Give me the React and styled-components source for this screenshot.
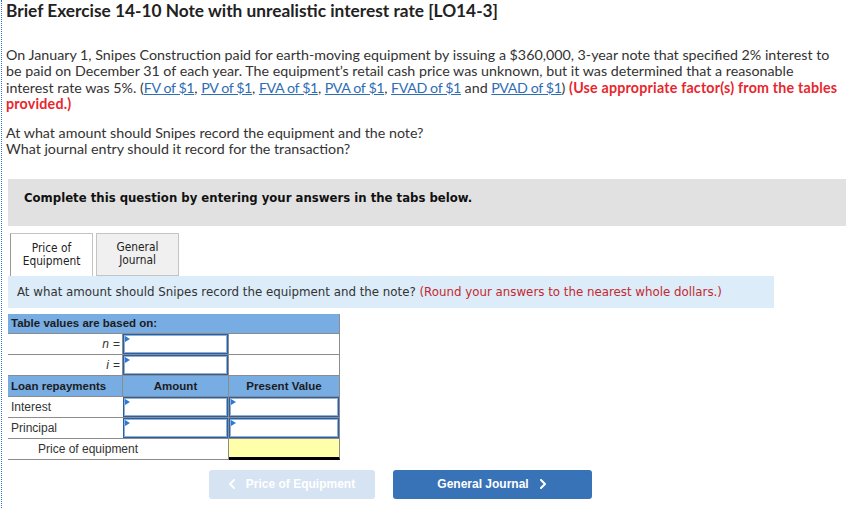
import React from "react";
import styled, { createGlobalStyle } from "styled-components";

const GlobalStyle = createGlobalStyle`
  html, body { margin: 0; padding: 0; background: #fff; }
  body { font-family: "Lato", "Liberation Sans", sans-serif; }
`;

const Page = styled.div`
  margin-left: 1px;
  border-left: 1px dotted #2f6fd8;
  min-height: 508px;
  box-sizing: border-box;
  padding: 1px 2px 0 4px;
`;

const Title = styled.h1`
  margin: 0;
  font-family: "Lato", "Liberation Sans", sans-serif;
  font-weight: 700;
  font-size: 17.3px;
  line-height: 20px;
  color: #222;
`;

const Para = styled.p`
  margin: ${(p) => p.$top}px 0 0;
  font-family: "Lato", "Liberation Sans", sans-serif;
  font-size: 14.25px;
  line-height: 16.3px;
  color: #333;
  white-space: nowrap;
`;

const Link = styled.a`
  color: #2f6eb5;
  text-decoration: underline;
  letter-spacing: -0.4px;
`;

const Alert = styled.strong`
  color: #e8262d;
  font-weight: 700;
  letter-spacing: 0.2px;
`;

const Panel = styled.div`
  margin: 21px 8px 0 2px;
  height: 47px;
  box-sizing: border-box;
  padding: 11px 16px 0;
  background: #e1e1e1;
  font-family: "DejaVu Sans Condensed", "DejaVu Sans", sans-serif;
  font-weight: 700;
  font-size: 13px;
  line-height: 16px;
  color: #111;
`;

const Tabs = styled.div`
  display: flex;
  gap: 3px;
  margin: 7px 0 0 4px;
`;

const Tab = styled.div`
  width: 83px;
  height: 43px;
  box-sizing: border-box;
  display: flex;
  align-items: center;
  justify-content: center;
  text-align: center;
  font-family: "DejaVu Sans Condensed", "DejaVu Sans", sans-serif;
  font-size: 11.8px;
  line-height: 13px;
  color: #222;
  background: ${(p) => (p.$active ? "#fff" : "#f0f0f0")};
  border: 1px solid #c4c4c4;
  border-bottom: ${(p) => (p.$active ? "none" : "1px solid #c4c4c4")};
  border-left-color: ${(p) => (p.$active ? "#999" : "#c4c4c4")};
`;

const Bar = styled.div`
  margin-left: 2px;
  width: 766px;
  height: 32px;
  box-sizing: border-box;
  padding-left: 9px;
  display: flex;
  align-items: center;
  background: #dcecf9;
  font-family: "DejaVu Sans Condensed", "DejaVu Sans", sans-serif;
  font-size: 13.15px;
  color: #333;
  white-space: pre;
`;

const Note = styled.span`
  color: #c6282e;
`;

const Grid = styled.div`
  margin: 6px 0 0 2px;
  width: 332px;
  display: grid;
  grid-template-columns: 115px 106px 111px;
  grid-template-rows: 20px repeat(6, 21px);
  font-family: "Liberation Sans", Arial, sans-serif;
  font-size: 12px;
  color: #333;
`;

const Cell = styled.div`
  box-sizing: border-box;
  display: flex;
  align-items: center;
  justify-content: ${(p) => p.$align || "flex-start"};
  grid-column: span ${(p) => p.$span || 1};
  padding: ${(p) => (p.$pad != null ? p.$pad : "0 0 0 3px")};
  background: ${(p) => (p.$head ? "#78ade3" : p.$yellow ? "#ffffaa" : "#fff")};
  color: ${(p) => (p.$head ? "#1c1c1c" : "#333")};
  font-weight: ${(p) => (p.$head ? 700 : 400)};
  font-size: ${(p) => (p.$head ? "11.5px" : "12px")};
  border-bottom: ${(p) => (p.$yellow ? "3px solid #000" : "1px solid #8c8c8c")};
  border-right: ${(p) => (p.$noRight ? "none" : "1px solid #8c8c8c")};
  position: relative;
`;

const Var = styled.i`
  font-style: italic;
  margin-right: 4px;
`;

const Field = styled.input`
  width: 100%;
  height: 100%;
  margin: 0;
  box-sizing: border-box;
  border: 1px solid #2c5f9f;
  box-shadow: inset 0 0 0 1px #8fb0da;
  background: #fff;
  outline: none;
  font: inherit;
`;

const Flag = styled.span`
  position: absolute;
  top: 2px;
  left: 2px;
  width: 0;
  height: 0;
  border-left: 5px solid #2d7ad6;
  border-top: 3px solid transparent;
  border-bottom: 3px solid transparent;
`;

const ButtonRow = styled.div`
  margin: 10px 0 0 2px;
  width: 784px;
  display: flex;
  justify-content: center;
  gap: 18px;
`;

const NavButton = styled.button`
  width: ${(p) => p.$w}px;
  height: 29px;
  border: none;
  border-radius: 3px;
  display: inline-flex;
  align-items: center;
  justify-content: center;
  gap: 10px;
  padding: 0;
  background: ${(p) => (p.disabled ? "#d6e3f2" : "#3873b8")};
  color: #fff;
  font-family: "Liberation Sans", Arial, sans-serif;
  font-weight: 700;
  font-size: 12px;
  cursor: ${(p) => (p.disabled ? "default" : "pointer")};
`;

const Chevron = ({ dir }) => (
  <svg width="8" height="10" viewBox="0 0 8 10" fill="none">
    <polyline
      points={dir === "left" ? "6,1 2,5 6,9" : "2,1 6,5 2,9"}
      stroke="#fff"
      strokeWidth="2"
      strokeLinecap="round"
      strokeLinejoin="round"
    />
  </svg>
);

const InputCell = ({ flag = true }) => (
  <Cell $pad="0">
    <Field type="text" />
    {flag && <Flag />}
  </Cell>
);

export default function App() {
  return (
    <>
      <GlobalStyle />
      <Page>
        <Title>Brief Exercise 14-10 Note with unrealistic interest rate [LO14-3]</Title>
        <Para $top={26}>
          On January 1, Snipes Construction paid for earth-moving equipment by issuing a $360,000, 3-year note that specified 2% interest to
          <br />
          be paid on December 31 of each year. The equipment’s retail cash price was unknown, but it was determined that a reasonable
          <br />
          interest rate was 5%. (<Link>FV of $1</Link>, <Link>PV of $1</Link>, <Link>FVA of $1</Link>, <Link>PVA of $1</Link>,{" "}
          <Link>FVAD of $1</Link> and <Link>PVAD of $1</Link>) <Alert>(Use appropriate factor(s) from the tables</Alert>
          <br />
          <Alert>provided.)</Alert>
        </Para>
        <Para $top={13}>
          At what amount should Snipes record the equipment and the note?
          <br />
          What journal entry should it record for the transaction?
        </Para>
        <Panel>Complete this question by entering your answers in the tabs below.</Panel>
        <Tabs>
          <Tab $active>
            Price of
            <br />
            Equipment
          </Tab>
          <Tab>
            General
            <br />
            Journal
          </Tab>
        </Tabs>
        <Bar>
          At what amount should Snipes record the equipment and the note? <Note>(Round your answers to the nearest whole dollars.)</Note>
        </Bar>
        <Grid>
          <Cell $head $span={3}>Table values are based on:</Cell>

          <Cell $align="flex-end" $pad="0 2px 0 0">
            <Var>n</Var>=
          </Cell>
          <InputCell />
          <Cell />

          <Cell $align="flex-end" $pad="0 2px 0 0">
            <Var>i</Var>=
          </Cell>
          <InputCell />
          <Cell />

          <Cell $head>Loan repayments</Cell>
          <Cell $head $align="center" $pad="0">Amount</Cell>
          <Cell $head $align="center" $pad="0">Present Value</Cell>

          <Cell $noRight>Interest</Cell>
          <InputCell />
          <InputCell />

          <Cell $noRight>Principal</Cell>
          <InputCell />
          <InputCell />

          <Cell $span={2} $pad="0 0 0 30px">Price of equipment</Cell>
          <Cell $yellow $pad="0" />
        </Grid>
        <ButtonRow>
          <NavButton $w={166} disabled>
            <Chevron dir="left" />
            Price of Equipment
          </NavButton>
          <NavButton $w={199}>
            General Journal
            <Chevron dir="right" />
          </NavButton>
        </ButtonRow>
      </Page>
    </>
  );
}
